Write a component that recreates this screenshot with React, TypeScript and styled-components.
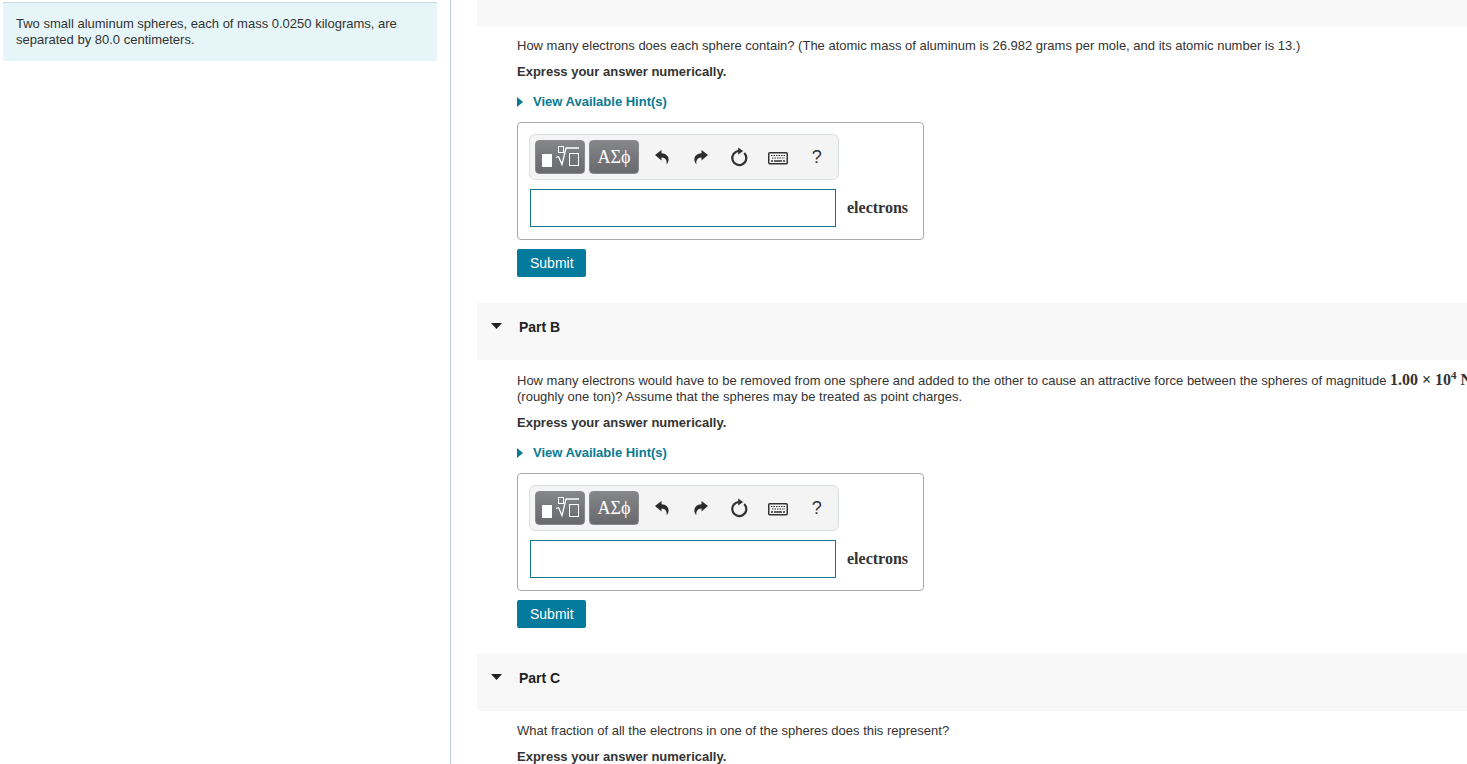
import React, { useId } from "react";
import styled, { createGlobalStyle } from "styled-components";

const GlobalStyle = createGlobalStyle`
  * { box-sizing: border-box; }
  html, body, #root { height: 100%; }
  body {
    margin: 0;
    overflow: hidden;
    background: #fff;
    color: #333;
    font: 13px/16px "Liberation Sans", Arial, sans-serif;
  }
  p { margin: 0; }
`;

const Page = styled.div`
  display: flex;
  height: 100%;
  overflow: hidden;
`;

const Sidebar = styled.aside`
  flex: 0 0 451px;
  padding: 2px 13px 0 3px;
  border-right: 1px solid #b9cbd3;
`;

const Intro = styled.p`
  padding: 13px;
  border-top: 1px solid #c9dde0;
  background: #e6f5f7;
`;

const Main = styled.main`
  flex: 1;
  min-width: 0;
  padding-left: 26px;
  overflow: hidden;
`;

const PartHeader = styled.header<{ $cut?: boolean }>`
  display: flex;
  align-items: flex-start;
  height: ${(p) => (p.$cut ? 26 : 57)}px;
  padding: ${(p) => (p.$cut ? 0 : "16px 14px")};
  background: #f8f8f8;
`;

const Toggle = styled.button`
  display: flex;
  align-items: center;
  gap: 17px;
  padding: 0;
  border: 0;
  background: none;
  color: #222;
  font: bold 14px/16px "Liberation Sans", Arial, sans-serif;
`;

const PartBody = styled.div`
  padding: 12px 0 26px 40px;
`;

const Question = styled.p`
  margin-bottom: 10px;
  white-space: nowrap;
`;

const Instruction = styled.p`
  margin-bottom: 14px;
  font-weight: bold;
`;

const HintLink = styled.a`
  display: flex;
  align-items: center;
  gap: 10px;
  width: max-content;
  margin-bottom: 12px;
  color: #087a92;
  font-weight: bold;
  text-decoration: none;
`;

const AnswerBox = styled.div`
  width: 407px;
  max-width: 100%;
  padding: 11px 12px 12px 11px;
  border: 1px solid #aaa;
  border-radius: 4px;
`;

const Toolbar = styled.div`
  display: flex;
  align-items: center;
  width: 310px;
  height: 46px;
  padding: 0 2px 0 5px;
  border: 1px solid #d8e0e0;
  border-radius: 6px;
  background: #f4f4f4;
`;

const PaletteButton = styled.button`
  display: flex;
  align-items: center;
  justify-content: center;
  width: 50px;
  height: 34px;
  margin-right: 4px;
  padding: 0;
  border: 1px solid #8a8a8e;
  border-radius: 4px;
  background: linear-gradient(#85868a, #68696d);
  color: #fff;
  font: 18px/20px "Liberation Serif", "Times New Roman", serif;
`;

const IconButton = styled.button`
  display: flex;
  flex: 1;
  align-items: center;
  justify-content: center;
  height: 34px;
  padding: 0;
  border: 0;
  background: none;
  color: #333;
  font: 18px/20px "Liberation Sans", Arial, sans-serif;
`;

const AnswerRow = styled.div`
  display: flex;
  align-items: center;
  gap: 11px;
  margin-top: 9px;
  padding-left: 1px;
`;

const AnswerInput = styled.input`
  width: 306px;
  height: 38px;
  padding: 0 8px;
  border: 1px solid #14778c;
  background: #fff;
  font: inherit;
  outline: 0;
`;

const Unit = styled.label`
  font: bold 16px/16px "Liberation Serif", "Times New Roman", serif;
`;

const MathText = styled.span`
  font: bold 16px/16px "Liberation Serif", "Times New Roman", serif;

  sup {
    font-size: 11px;
    line-height: 1px;
  }
`;

const Submit = styled.button`
  display: block;
  height: 28px;
  margin-top: 9px;
  padding: 0 12px 0 13px;
  border: 0;
  border-radius: 2px;
  background: #047a9c;
  color: #fff;
  font: 14px/16px "Liberation Sans", Arial, sans-serif;
`;

const TemplatesIcon = () => (
  <svg width="40" height="26" viewBox="0 0 40 26" fill="none" stroke="#fff">
    <rect x="2" y="10" width="10" height="13" fill="#fff" stroke="none" />
    <rect x="18.5" y="2.500" width="5" height="6" />
    <path d="M16 13.500l2.500-1 3.500 8 4-16.500H39" strokeWidth="1.300" />
    <rect x="29.500" y="9.500" width="9" height="12" />
  </svg>
);

const UndoIcon = ({ flip }: { flip?: boolean }) => (
  <svg width="14" height="16" viewBox="0 0 14 16" fill="#2b2b2b">
    <path
      transform={flip ? "translate(14 0) scale(-1 1)" : undefined}
      d="M0 6L6.500 1v3.200C11 4.400 13.600 7 13.600 10.500c0 1.900-.7 3.400-2 4.700.4-3.700-.8-6.500-5.100-6.700V11.500z"
    />
  </svg>
);

const ResetIcon = () => (
  <svg width="18" height="20" viewBox="0 0 18 20">
    <path d="M14.200 6A7 7 0 1 1 9 4" fill="none" stroke="#333" strokeWidth="2.200" />
    <path d="M8.200 0.500L13.200 4 8.200 7.500z" fill="#333" />
  </svg>
);

const KeyboardIcon = () => (
  <svg width="20" height="16" viewBox="0 0 20 16" fill="none" stroke="#333">
    <rect x="0.750" y="3.750" width="18.500" height="11" rx="1" strokeWidth="1.500" />
    <path d="M3 6.500h14M4 9h13" strokeWidth="1.200" strokeDasharray="1.500 1" />
    <path d="M3 12h2M6 12h8M15 12h2" strokeWidth="1.300" />
  </svg>
);

const RightCaret = () => (
  <svg width="6" height="10" viewBox="0 0 6 10">
    <path d="M0 0l6 5-6 5z" fill="#087a92" />
  </svg>
);

const DownCaret = () => (
  <svg width="11" height="8" viewBox="0 0 11 8">
    <path d="M0 0h11L5.500 6z" fill="#222" />
  </svg>
);

function Hint() {
  return (
    <HintLink href="#hints">
      <RightCaret />
      View Available Hint(s)
    </HintLink>
  );
}

function AnswerForm() {
  const id = useId();
  return (
    <form onSubmit={(e) => e.preventDefault()}>
      <AnswerBox>
        <Toolbar role="toolbar">
          <PaletteButton type="button" aria-label="Templates">
            <TemplatesIcon />
          </PaletteButton>
          <PaletteButton type="button">ΑΣϕ</PaletteButton>
          <IconButton type="button" aria-label="Undo">
            <UndoIcon />
          </IconButton>
          <IconButton type="button" aria-label="Redo">
            <UndoIcon flip />
          </IconButton>
          <IconButton type="button" aria-label="Reset">
            <ResetIcon />
          </IconButton>
          <IconButton type="button" aria-label="Keyboard shortcuts">
            <KeyboardIcon />
          </IconButton>
          <IconButton type="button">?</IconButton>
        </Toolbar>
        <AnswerRow>
          <AnswerInput id={id} type="text" />
          <Unit htmlFor={id}>electrons</Unit>
        </AnswerRow>
      </AnswerBox>
      <Submit type="submit">Submit</Submit>
    </form>
  );
}

function Header({ title }: { title: string }) {
  return (
    <PartHeader>
      <Toggle type="button" aria-expanded="true">
        <DownCaret />
        {title}
      </Toggle>
    </PartHeader>
  );
}

export default function App() {
  return (
    <>
      <GlobalStyle />
      <Page>
        <Sidebar>
          <Intro>
            Two small aluminum spheres, each of mass 0.0250 kilograms, are separated by 80.0 centimeters.
          </Intro>
        </Sidebar>
        <Main>
          <section>
            <PartHeader $cut />
            <PartBody>
              <Question>
                How many electrons does each sphere contain? (The atomic mass of aluminum is 26.982 grams per mole, and
                its atomic number is 13.)
              </Question>
              <Instruction>Express your answer numerically.</Instruction>
              <Hint />
              <AnswerForm />
            </PartBody>
          </section>
          <section>
            <Header title="Part B" />
            <PartBody>
              <Question>
                How many electrons would have to be removed from one sphere and added to the other to cause an
                attractive force between the spheres of magnitude{" "}
                <MathText>
                  1.00 × 10<sup>4</sup> N
                </MathText>
                <br />
                (roughly one ton)? Assume that the spheres may be treated as point charges.
              </Question>
              <Instruction>Express your answer numerically.</Instruction>
              <Hint />
              <AnswerForm />
            </PartBody>
          </section>
          <section>
            <Header title="Part C" />
            <PartBody>
              <Question>What fraction of all the electrons in one of the spheres does this represent?</Question>
              <Instruction>Express your answer numerically.</Instruction>
            </PartBody>
          </section>
        </Main>
      </Page>
    </>
  );
}
